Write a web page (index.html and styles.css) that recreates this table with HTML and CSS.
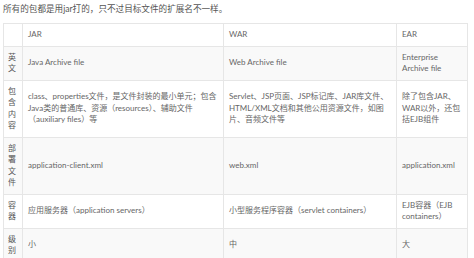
FILE: index.html
```html
<!DOCTYPE html>
<html lang="zh-CN">
  <head>
    <meta charset="UTF-8" />
    <meta name="viewport" content="width=device-width, initial-scale=1.0" />
    <link rel="stylesheet" href="styles.css">
  </head>
  <body>
    <p class="intro">所有的包都是用jar打的，只不过目标文件的扩展名不一样。</p>
    <table class="pkg-table">
      <colgroup>
        <col class="col-label" />
        <col class="col-jar" />
        <col class="col-war" />
        <col class="col-ear" />
      </colgroup>
      <thead>
        <tr>
          <th></th>
          <th>JAR</th>
          <th>WAR</th>
          <th>EAR</th>
        </tr>
      </thead>
      <tbody>
        <tr>
          <td class="label">英文</td>
          <td>Java Archive file</td>
          <td>Web Archive file</td>
          <td>Enterprise Archive file</td>
        </tr>
        <tr>
          <td class="label">包含内容</td>
          <td>class、properties文件，是文件封装的最小单元；包含Java类的普通库、资源（resources）、辅助文件（auxiliary files）等</td>
          <td>Servlet、JSP页面、JSP标记库、JAR库文件、HTML/XML文档和其他公用资源文件，如图片、音频文件等</td>
          <td>除了包含JAR、WAR以外，还包括EJB组件</td>
        </tr>
        <tr>
          <td class="label">部署文件</td>
          <td>application-client.xml</td>
          <td>web.xml</td>
          <td>application.xml</td>
        </tr>
        <tr>
          <td class="label">容器</td>
          <td>应用服务器（application servers）</td>
          <td>小型服务程序容器（servlet containers）</td>
          <td>EJB容器（EJB containers）</td>
        </tr>
        <tr>
          <td class="label">级别</td>
          <td>小</td>
          <td>中</td>
          <td>大</td>
        </tr>
      </tbody>
    </table>
  </body>
</html>
```

FILE: styles.css
```css
body {
  margin: 0;
  padding: 3px 3px 0;
  font-family: "Lato", "Noto Sans CJK SC", sans-serif;
  color: #555;
  background: #fff;
}
.intro {
  margin: 0 0 7px;
  font-size: 8.6px;
  line-height: 13px;
}
.pkg-table {
  width: 464px;
  table-layout: fixed;
  border-collapse: collapse;
  font-size: 8px;
  line-height: 11.5px;
  color: #666;
}
.col-label {
  width: 19px;
}
.col-jar {
  width: 201px;
}
.col-war {
  width: 173px;
}
.col-ear {
  width: 71px;
}
.pkg-table th,
.pkg-table td {
  border: 1px solid #e6e6e6;
  padding: 5px 5px;
  text-align: left;
  font-weight: normal;
  vertical-align: middle;
}
.pkg-table td.label {
  padding: 5px 4px;
  color: #555;
}
.pkg-table tbody tr:nth-child(odd) {
  background: #f9f9f9;
}
```
